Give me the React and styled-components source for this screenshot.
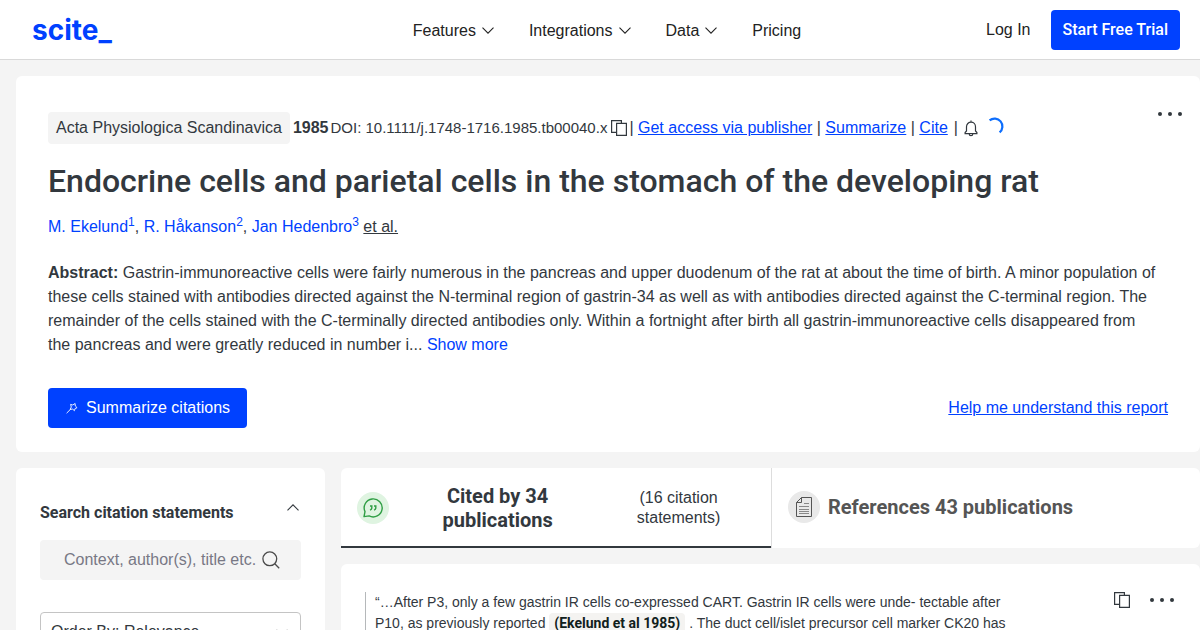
import React from 'react';
import styled, { createGlobalStyle } from 'styled-components';

const GlobalStyle = createGlobalStyle`
  * {
    box-sizing: border-box;
  }
  html {
    scrollbar-width: none;
  }
  body {
    margin: 0;
    background: #f4f4f4;
    color: #32383e;
    font-family: 'Liberation Sans', Arial, sans-serif;
    font-size: 16px;
    line-height: 24px;
  }
  button, input, select {
    font: inherit;
    color: inherit;
  }
`;

const Chevron = ({ up }) => (
  <svg width="12" height="7" viewBox="0 0 12 7" fill="none" stroke="currentColor" strokeWidth="1.1">
    <path d={up ? 'M0.5 6.3 6 0.8l5.5 5.5' : 'M0.5 0.6 6 6.1l5.5-5.5'} />
  </svg>
);

const CopyIcon = () => (
  <svg width="16" height="16" viewBox="0 0 16 16" fill="none" stroke="currentColor" strokeWidth="1.2">
    <path d="M5.6 12.4H0.6V0.6h9.8v2.6" />
    <path d="M5.6 3.3h9.8v12.1H5.6z" />
  </svg>
);

const BellIcon = () => (
  <svg width="14" height="17" viewBox="0 0 14 17" fill="none" stroke="currentColor" strokeWidth="1.2">
    <path d="M7 0.4v1.8M2.5 11V6.7a4.5 4.5 0 0 1 9 0V11l1.4 1.6v1H1.1v-1zM5.2 13.9a1.8 1.8 0 0 0 3.6 0" />
  </svg>
);

const Spinner = () => (
  <svg width="16" height="18" viewBox="0 0 16 18" fill="none" stroke="#0d6efd" strokeWidth="2.2">
    <path d="M1.6 3.4A7.5 7.5 0 0 1 11.6 15.4" />
  </svg>
);

const DotsIcon = () => (
  <svg width="24" height="4" viewBox="0 0 24 4" fill="currentColor">
    <circle cx="2" cy="2" r="2" />
    <circle cx="12" cy="2" r="2" />
    <circle cx="22" cy="2" r="2" />
  </svg>
);

const WandIcon = () => (
  <svg width="12" height="12" viewBox="0 0 12 12" fill="none" stroke="currentColor" strokeWidth="0.9">
    <path d="M0.6 11.2 5 6.8M4.6 2.4l2.2.6 2.3-1.5.2 2.5 1.8 1.7-2 .8-.7 2.2-1.7-1.6-2.5.3 1.1-2.4z" />
  </svg>
);

const SearchIcon = () => (
  <svg width="18" height="18" viewBox="0 0 18 18" fill="none" stroke="#4a4a4a" strokeWidth="1.3">
    <circle cx="7.8" cy="7.8" r="6.9" />
    <path d="m12.8 12.8 4.4 4.4" />
  </svg>
);

const QuoteIcon = () => (
  <svg width="20" height="20" viewBox="0 0 20 20" fill="none" stroke="#2f9e44" strokeWidth="1.4">
    <path d="M1 18.6 2 13.6A9 9 0 1 1 6.1 17.9z" strokeLinejoin="round" />
    <path d="M7 8h1.8v1.8c0 1.4-.6 2-1.8 2.4M11 8h1.8v1.8c0 1.4-.6 2-1.8 2.4" />
  </svg>
);

const DocumentIcon = () => (
  <svg width="16" height="20" viewBox="0 0 16 20" fill="none" stroke="#555">
    <path d="M5.5 0.5h10v19H0.5v-14zM5.5 0.5v5h-5" />
    <path d="M8 6.5h5M3 9.5h10M3 12.5h10M3 14.5h10M3 16.5h10" stroke="#888" />
  </svg>
);

const NAV_ITEMS = [
  { label: 'Features', menu: true },
  { label: 'Integrations', menu: true },
  { label: 'Data', menu: true },
  { label: 'Pricing', menu: false },
];

const AUTHORS = ['M. Ekelund', 'R. Håkanson', 'Jan Hedenbro'];

const SiteHeader = () => (
  <Header>
    <Logo href="#">scite_</Logo>
    <Nav>
      {NAV_ITEMS.map((item) =>
        item.menu ? (
          <NavButton key={item.label} type="button">
            {item.label}
            <Chevron />
          </NavButton>
        ) : (
          <NavLink key={item.label} href="#">
            {item.label}
          </NavLink>
        )
      )}
    </Nav>
    <Account>
      <NavLink href="#">Log In</NavLink>
      <TrialButton type="button">Start Free Trial</TrialButton>
    </Account>
  </Header>
);

const Paper = () => (
  <PaperCard>
    <PaperTop>
      <Meta>
        <Journal>Acta Physiologica Scandinavica</Journal>
        <Year>1985</Year>
        <Doi>DOI: 10.1111/j.1748-1716.1985.tb00040.x</Doi>
        <CopyDoi type="button" aria-label="Copy DOI">
          <CopyIcon />
        </CopyDoi>
        <span>
          | <TextLink href="#">Get access via publisher</TextLink> | <TextLink href="#">Summarize</TextLink> |{' '}
          <TextLink href="#">Cite</TextLink>
        </span>
        <Divider>|</Divider>
        <IconButton type="button" aria-label="Notify me">
          <BellIcon />
        </IconButton>
        <Loading>
          <Spinner />
        </Loading>
      </Meta>
      <MoreButton type="button" aria-label="More options">
        <DotsIcon />
      </MoreButton>
    </PaperTop>
    <Title>Endocrine cells and parietal cells in the stomach of the developing rat</Title>
    <Authors>
      {AUTHORS.map((author, i) => (
        <React.Fragment key={author}>
          {i > 0 && ', '}
          <AuthorLink href="#">
            {author}
            <sup>{i + 1}</sup>
          </AuthorLink>
        </React.Fragment>
      ))}{' '}
      <EtAl href="#">et al.</EtAl>
    </Authors>
    <Abstract>
      <b>Abstract:</b> Gastrin-immunoreactive cells were fairly numerous in the pancreas and upper duodenum of the rat at
      about the time of birth. A minor population of these cells stained with antibodies directed against the N-terminal
      region of gastrin-34 as well as with antibodies directed against the C-terminal region. The remainder of the cells
      stained with the C-terminally directed antibodies only. Within a fortnight after birth all gastrin-immunoreactive
      cells disappeared from the pancreas and were greatly reduced in number i...{' '}
      <ShowMore type="button">Show more</ShowMore>
    </Abstract>
    <PaperActions>
      <SummarizeButton type="button">
        <WandIcon />
        Summarize citations
      </SummarizeButton>
      <TextLink href="#">Help me understand this report</TextLink>
    </PaperActions>
  </PaperCard>
);

const Filters = () => (
  <Sidebar>
    <SidebarHeader>
      <SidebarTitle htmlFor="statement-search">Search citation statements</SidebarTitle>
      <CollapseButton type="button" aria-label="Collapse search">
        <Chevron up />
      </CollapseButton>
    </SidebarHeader>
    <SearchBox>
      <SearchInput id="statement-search" type="text" placeholder="Context, author(s), title etc." />
      <SearchIcon />
    </SearchBox>
    <SelectBox>
      <OrderSelect aria-label="Order by" defaultValue="relevance">
        <option value="relevance">Order By: Relevance</option>
      </OrderSelect>
      <Chevron />
    </SelectBox>
  </Sidebar>
);

const Results = () => (
  <Main>
    <Tabs role="tablist">
      <CitedTab type="button" role="tab" aria-selected="true">
        <IconCircle $color="#dff4e1">
          <QuoteIcon />
        </IconCircle>
        <TabTitle>Cited by 34 publications</TabTitle>
        <TabNote>(16 citation statements)</TabNote>
      </CitedTab>
      <ReferencesTab type="button" role="tab" aria-selected="false">
        <IconCircle $color="#e9e9e9">
          <DocumentIcon />
        </IconCircle>
        <TabTitle>References 43 publications</TabTitle>
      </ReferencesTab>
    </Tabs>
    <CitationCard>
      <Quote>
        “…After P3, only a few gastrin IR cells co-expressed CART. Gastrin IR cells were unde- tectable after P10, as
        previously reported <Cited>(Ekelund et al 1985)</Cited> . The duct cell/islet precursor cell marker CK20 has
      </Quote>
      <CitationActions>
        <IconButton type="button" aria-label="Copy citation">
          <CopyIcon />
        </IconButton>
        <IconButton type="button" aria-label="More options">
          <DotsIcon />
        </IconButton>
      </CitationActions>
    </CitationCard>
  </Main>
);

const App = () => (
  <>
    <GlobalStyle />
    <SiteHeader />
    <Page>
      <Paper />
      <Columns>
        <Filters />
        <Results />
      </Columns>
    </Page>
  </>
);

export default App;

const Header = styled.header`
  display: grid;
  grid-template-columns: 1fr auto 1fr;
  align-items: center;
  height: 60px;
  padding: 0 20px 0 32px;
  background: #fff;
  border-bottom: 1px solid #d9d9d9;
  color: #222;
`;

const Logo = styled.a`
  color: #0041ff;
  font-family: Inter, sans-serif;
  font-size: 28px;
  font-weight: 700;
  line-height: 32px;
  text-decoration: none;
`;

const Nav = styled.nav`
  display: flex;
  gap: 35px;
  padding: 2px 0 0 2px;
`;

const NavLink = styled.a`
  color: #222;
  text-decoration: none;
`;

const NavButton = styled.button`
  display: flex;
  align-items: center;
  gap: 6px;
  padding: 0;
  border: none;
  background: none;
  cursor: pointer;
`;

const Account = styled.div`
  display: flex;
  align-items: center;
  justify-content: flex-end;
  gap: 20px;
`;

const TrialButton = styled.button`
  height: 40px;
  padding: 0 12px;
  border: none;
  border-radius: 4px;
  background: #0041ff;
  color: #fff;
  font-family: Roboto, sans-serif;
  font-weight: 500;
  cursor: pointer;
`;

const Page = styled.div`
  padding: 16px 0 16px 16px;
`;

const PaperCard = styled.section`
  padding: 32px 32px 24px;
  border-radius: 6px;
  background: #fff;
`;

const PaperTop = styled.div`
  display: flex;
  align-items: center;
  justify-content: space-between;
  height: 40px;
`;

const Meta = styled.div`
  display: flex;
  align-items: center;
  white-space: nowrap;
`;

const Journal = styled.span`
  margin-right: 3px;
  padding: 4px 8px;
  border-radius: 4px;
  background: #f4f4f4;
`;

const Year = styled.b`
  margin-right: 2px;
`;

const Doi = styled.span`
  font-size: 15px;
`;

const IconButton = styled.button`
  display: flex;
  padding: 0;
  border: none;
  background: none;
  cursor: pointer;
`;

const CopyDoi = styled(IconButton)`
  margin: 0 2px 0 4px;
`;

const Divider = styled.span`
  margin: 0 6px;
`;

const Loading = styled.span`
  display: flex;
  margin-left: 10px;
  margin-bottom: 4px;
`;

const MoreButton = styled(IconButton)`
  align-self: flex-start;
  margin-top: 4px;
  margin-right: -14px;
`;

const TextLink = styled.a`
  color: #0041ff;
  text-decoration: underline;
`;

const Title = styled.h1`
  margin: 13px 0 0;
  font-family: Roboto, sans-serif;
  font-size: 32px;
  font-weight: 500;
  line-height: 40px;
`;

const Authors = styled.p`
  margin: 14px 0 0;

  sup {
    font-size: 12px;
    line-height: 0;
  }
`;

const AuthorLink = styled.a`
  color: #0041ff;
  text-decoration: none;
`;

const EtAl = styled.a`
  color: inherit;
`;

const Abstract = styled.p`
  margin: 22px 0 0;
  padding-right: 10px;
`;

const ShowMore = styled.button`
  padding: 0;
  border: none;
  background: none;
  color: #0041ff;
  cursor: pointer;
`;

const PaperActions = styled.div`
  display: flex;
  align-items: center;
  justify-content: space-between;
  margin-top: 31px;
`;

const SummarizeButton = styled.button`
  display: flex;
  align-items: center;
  gap: 8px;
  height: 40px;
  padding: 0 17px 0 18px;
  border: none;
  border-radius: 4px;
  background: #0041ff;
  color: #fff;
  cursor: pointer;
`;

const Columns = styled.div`
  display: grid;
  grid-template-columns: 309px 1fr;
  gap: 16px;
  margin-top: 16px;
`;

const Sidebar = styled.aside`
  padding: 33px 24px 32px;
  border-radius: 6px;
  background: #fff;
`;

const SidebarHeader = styled.div`
  display: flex;
  justify-content: space-between;
  height: 24px;
  padding-right: 2px;
`;

const SidebarTitle = styled.label`
  font-family: Roboto, sans-serif;
  font-weight: 700;
`;

const CollapseButton = styled(IconButton)`
  padding-top: 3px;
`;

const SearchBox = styled.div`
  display: flex;
  align-items: center;
  height: 40px;
  margin-top: 15px;
  padding: 0 21px 0 24px;
  border-radius: 4px;
  background: #f4f4f4;
`;

const SearchInput = styled.input`
  flex: 1;
  min-width: 0;
  padding: 0;
  border: none;
  outline: none;
  background: none;

  &::placeholder {
    color: #787885;
    opacity: 1;
  }
`;

const SelectBox = styled.div`
  display: grid;
  grid-template-columns: 1fr auto;
  align-items: center;
  height: 40px;
  margin-top: 32px;
  padding: 0 12px 0 10px;
  border: 1px solid #c4c4c4;
  border-radius: 4px;

  svg {
    color: #b8b8b8;
  }
`;

const OrderSelect = styled.select`
  appearance: none;
  padding: 0;
  border: none;
  background: none;
`;

const Main = styled.main`
  min-width: 0;
`;

const Tabs = styled.div`
  display: grid;
  grid-template-columns: 430fr 429fr;
  height: 80px;
  border-radius: 6px;
  background: #fff;
`;

const Tab = styled.button`
  align-items: center;
  padding: 0 16px;
  border: none;
  background: none;
  cursor: pointer;
`;

const CitedTab = styled(Tab)`
  display: grid;
  grid-template-columns: 32px 3fr 2fr;
  padding-top: 2px;
  padding-right: 20px;
  border-bottom: 2px solid #32383e;
`;

const ReferencesTab = styled(Tab)`
  display: flex;
  gap: 8px;
  padding-bottom: 2px;
  border-left: 1px solid #ddd;
  color: #555;
`;

const IconCircle = styled.span`
  display: flex;
  align-items: center;
  justify-content: center;
  width: 32px;
  height: 32px;
  border-radius: 50%;
  background: ${(props) => props.$color};
`;

const TabTitle = styled.span`
  font-family: Roboto, sans-serif;
  font-size: 20px;
  font-weight: 700;

  ${CitedTab} & {
    padding: 0 40px;
  }
`;

const TabNote = styled.span`
  padding: 0 16px;
  line-height: 20px;
`;

const CitationCard = styled.article`
  display: flex;
  justify-content: space-between;
  align-items: flex-start;
  margin-top: 16px;
  padding: 28px 26px 24px 24px;
  border-radius: 6px;
  background: #fff;
`;

const Quote = styled.blockquote`
  max-width: 660px;
  margin: 0;
  padding-left: 9px;
  border-left: 1px solid #b5b8ba;
  font-size: 14px;
  line-height: 21px;
`;

const Cited = styled.b`
  padding: 2px 5px;
  border-radius: 4px;
  background: #f4f3f1;
  color: #10201c;
  font-family: Roboto, sans-serif;
`;

const CitationActions = styled.div`
  display: flex;
  align-items: center;
  gap: 20px;
`;
